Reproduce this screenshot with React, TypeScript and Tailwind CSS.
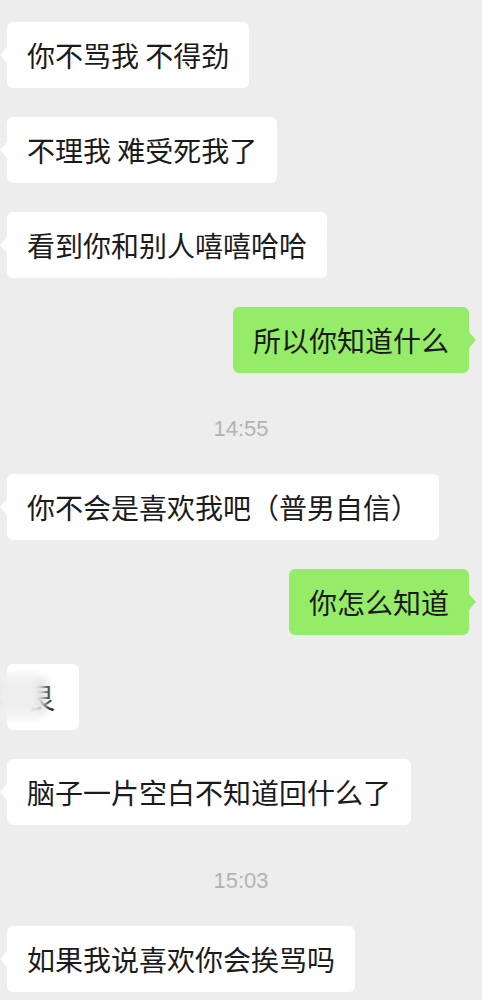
import React from 'react';

type Msg =
  | { kind: 'in'; text: string }
  | { kind: 'out'; text: string }
  | { kind: 'time'; text: string }
  | { kind: 'blur' };

const messages: Msg[] = [
  { kind: 'in', text: '你不骂我 不得劲' },
  { kind: 'in', text: '不理我 难受死我了' },
  { kind: 'in', text: '看到你和别人嘻嘻哈哈' },
  { kind: 'out', text: '所以你知道什么' },
  { kind: 'time', text: '14:55' },
  { kind: 'in', text: '你不会是喜欢我吧（普男自信）' },
  { kind: 'out', text: '你怎么知道' },
  { kind: 'blur' },
  { kind: 'in', text: '脑子一片空白不知道回什么了' },
  { kind: 'time', text: '15:03' },
  { kind: 'in', text: '如果我说喜欢你会挨骂吗' },
];

const font = { fontFamily: '"Noto Sans CJK SC", "Noto Sans", sans-serif' };

const InBubble: React.FC<{ text: string }> = ({ text }) => (
  <div className="flex justify-start pl-[7px]">
    <div className="relative bg-white rounded-[6px] px-5 py-[13px] text-[28px] leading-[40px] text-[#1b1b1b] whitespace-nowrap">
      <span className="absolute -left-[7px] top-[25px] w-0 h-0 border-y-[8px] border-y-transparent border-r-[7px] border-r-white" />
      {text}
    </div>
  </div>
);

const OutBubble: React.FC<{ text: string }> = ({ text }) => (
  <div className="flex justify-end pr-[13px]">
    <div className="relative bg-[#95ec69] rounded-[6px] px-5 py-[13px] text-[28px] leading-[40px] text-[#1b1b1b] whitespace-nowrap">
      <span className="absolute -right-[7px] top-[25px] w-0 h-0 border-y-[8px] border-y-transparent border-l-[7px] border-l-[#95ec69]" />
      {text}
    </div>
  </div>
);

// the reference hides this message behind a blur, only the tail of one glyph shows
const BlurBubble: React.FC = () => (
  <div className="flex justify-start pl-[7px]">
    <div className="relative bg-white rounded-[6px] w-[72px] pl-[20px] py-[13px] text-[28px] leading-[40px] text-[#1b1b1b]">
      <span className="absolute -left-[7px] top-[25px] w-0 h-0 border-y-[8px] border-y-transparent border-r-[7px] border-r-white" />
      艮
      <div className="absolute -left-[7px] top-[15px] w-[46px] h-[34px] bg-[#dcdcdc] blur-[5px]" />
      <div className="absolute -left-[7px] top-[10px] w-[38px] h-[46px] bg-[#f4f4f4] blur-[3px] opacity-75" />
    </div>
  </div>
);

const TimeStamp: React.FC<{ text: string }> = ({ text }) => (
  <div
    className="text-center text-[22px] leading-[26px] text-[#b3b3b3] pt-[14px] pb-[3px]"
    style={{ fontFamily: '"Liberation Sans", "Noto Sans", sans-serif' }}
  >
    {text}
  </div>
);

export default function App() {
  return (
    <div className="w-[482px] h-[1000px] bg-[#ededed] overflow-hidden" style={font}>
      <div className="flex flex-col gap-[29px] pt-[22px]">
        {messages.map((m, i) => {
          if (m.kind === 'in') return <InBubble key={i} text={m.text} />;
          if (m.kind === 'out') return <OutBubble key={i} text={m.text} />;
          if (m.kind === 'time') return <TimeStamp key={i} text={m.text} />;
          return <BlurBubble key={i} />;
        })}
      </div>
    </div>
  );
}
